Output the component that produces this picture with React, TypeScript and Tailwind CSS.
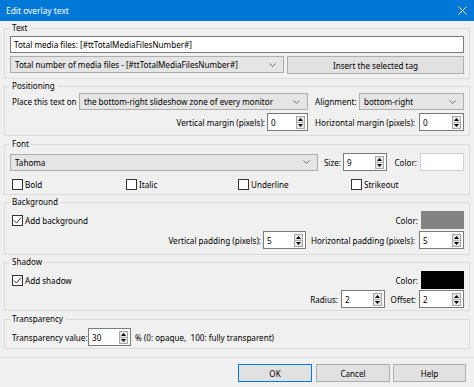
import React from 'react';

function Chevron() {
  return (
    <svg width="7" height="4" viewBox="0 0 7 4" className="shrink-0">
      <path d="M0.5 0.5 L3.5 3.5 L6.5 0.5" fill="none" stroke="#606060" strokeWidth="0.9" />
    </svg>
  );
}

function Select({ value, className = '' }: any) {
  return (
    <div className={`h-[17px] flex items-center justify-between bg-[#e5e5e5] border border-[#adadad] pl-[4px] pr-[7px] shrink-0 ${className}`}>
      <span className="truncate">{value}</span>
      <Chevron />
    </div>
  );
}

function Spin({ value, className = '' }: any) {
  return (
    <div className={`h-[18px] flex items-center justify-between bg-white border border-[#7a7a7a] pl-[3px] pr-[2px] shrink-0 ${className}`}>
      <span>{value}</span>
      <div className="w-[9px] h-[13px] flex flex-col border border-[#a8a8a8] bg-[#e6e6e6]">
        <div className="flex-1 flex items-center justify-center">
          <svg width="5" height="3" viewBox="0 0 5 3"><path d="M0 3 L2.5 0 L5 3Z" fill="#000" /></svg>
        </div>
        <div className="h-px bg-[#b8b8b8]" />
        <div className="flex-1 flex items-center justify-center">
          <svg width="5" height="3" viewBox="0 0 5 3"><path d="M0 0 L2.5 3 L5 0Z" fill="#000" /></svg>
        </div>
      </div>
    </div>
  );
}

function Check({ label, checked = false }: any) {
  return (
    <div className="flex items-center gap-[2px]">
      <div className="w-[11px] h-[11px] bg-white border border-[#333] flex items-center justify-center shrink-0">
        {checked && (
          <svg width="9" height="9" viewBox="0 0 9 9">
            <path d="M1 4.5 L3.5 7 L8 1.5" fill="none" stroke="#333" strokeWidth="1" />
          </svg>
        )}
      </div>
      <span>{label}</span>
    </div>
  );
}

function Group({ title, className = '', children }: any) {
  return (
    <fieldset className={`border border-[#dcdcdc] px-[5px] ${className}`}>
      <legend className="px-[2px] leading-[14px]">{title}</legend>
      {children}
    </fieldset>
  );
}

function Btn({ label, primary = false, className = '' }: any) {
  return (
    <div className={`h-[18px] flex items-center justify-center bg-[#e1e1e1] border ${primary ? 'border-[#0078d7]' : 'border-[#adadad]'} ${className}`}>
      {label}
    </div>
  );
}

export default function App() {
  return (
    <div className="w-[474px] h-[387px] bg-[#f0f0f0] flex flex-col text-[8.1px] leading-[11px] text-black font-['Noto_Sans',sans-serif] whitespace-nowrap overflow-hidden">
      {/* title bar */}
      <div className="h-[21px] bg-[#0078d7] text-white flex items-center justify-between pl-[6px] pr-[7px]">
        <span className="text-[8.4px]">Edit overlay text</span>
        <svg width="9" height="9" viewBox="0 0 9 9">
          <path d="M0.5 0.5 L8.5 8.5 M8.5 0.5 L0.5 8.5" stroke="#fff" strokeWidth="1" />
        </svg>
      </div>

      <div className="px-[4px] flex flex-col">
        <Group title="Text" className="pb-[4px]">
          <div className="pt-[1px] flex flex-col gap-[3px]">
            <div className="h-[17px] bg-white border border-[#7a7a7a] flex items-center pl-[3px]">
              Total media files: [#ttTotalMediaFilesNumber#]
            </div>
            <div className="flex">
              <Select value="Total number of media files - [#ttTotalMediaFilesNumber#]" className="w-[274px]" />
              <Btn label="Insert the selected tag" className="ml-[3px] flex-1 h-[17px]" />
            </div>
          </div>
        </Group>

        <Group title="Positioning" className="pb-[4px]">
          <div className="flex flex-col gap-[3px]">
            <div className="flex items-center">
              <span className="w-[69px] pl-[2px] shrink-0">Place this text on</span>
              <Select value="the bottom-right slideshow zone of every monitor" className="w-[229px]" />
              <span className="w-[51px] pl-[7px] shrink-0">Alignment:</span>
              <Select value="bottom-right" className="flex-1" />
            </div>
            <div className="flex items-center justify-end">
              <span className="pr-[2px]">Vertical margin (pixels):</span>
              <Spin value="0" className="w-[41px]" />
              <span className="w-[111px] text-right pr-[4px] shrink-0">Horizontal margin (pixels):</span>
              <Spin value="0" className="w-[45px]" />
            </div>
          </div>
        </Group>

        <Group title="Font" className="mt-[1px] pb-[4px]">
          <div className="pt-[2px] flex items-center">
            <Select value="Tahoma" className="w-[308px]" />
            <span className="w-[25px] text-right pr-[2px] shrink-0">Size:</span>
            <Spin value="9" className="w-[44px]" />
            <span className="w-[33px] text-right pr-[3px] shrink-0">Color:</span>
            <div className="flex-1 h-[18px] bg-white border border-[#d0d0d0]" />
          </div>
          <div className="mt-[8px] ml-[2px] grid grid-cols-[114px_112px_113px_1fr]">
            <Check label="Bold" />
            <Check label="Italic" />
            <Check label="Underline" />
            <Check label="Strikeout" />
          </div>
        </Group>

        <Group title="Background" className="pb-[5px]">
          <div className="pt-[2px] flex flex-col gap-[2px]">
            <div className="h-[18px] flex items-center justify-between">
              <div className="ml-[2px]"><Check label="Add background" checked /></div>
              <div className="flex items-center">
                <span className="pr-[3px]">Color:</span>
                <div className="w-[43px] h-[18px] bg-[#838383]" />
              </div>
            </div>
            <div className="flex items-center justify-end">
              <span className="pr-[2px]">Vertical padding (pixels):</span>
              <Spin value="5" className="w-[43px]" />
              <span className="w-[113px] text-right pr-[4px] shrink-0">Horizontal padding (pixels):</span>
              <Spin value="5" className="w-[45px]" />
            </div>
          </div>
        </Group>

        <Group title="Shadow" className="pb-[2px]">
          <div className="pt-[2px] flex flex-col gap-[1px]">
            <div className="h-[18px] flex items-center justify-between">
              <div className="ml-[2px]"><Check label="Add shadow" checked /></div>
              <div className="flex items-center">
                <span className="pr-[3px]">Color:</span>
                <div className="w-[43px] h-[18px] bg-black" />
              </div>
            </div>
            <div className="flex items-center justify-end">
              <span className="pr-[3px]">Radius:</span>
              <Spin value="2" className="w-[44px]" />
              <span className="w-[34px] text-right pr-[3px] shrink-0">Offset:</span>
              <Spin value="2" className="w-[45px]" />
            </div>
          </div>
        </Group>

        <Group title="Transparency" className="mt-[1px] pb-[2px]">
          <div className="pt-[2px] flex items-center">
            <span className="w-[78px] pl-[2px] shrink-0">Transparency value:</span>
            <Spin value="30" className="w-[43px]" />
            <span className="ml-[4px] whitespace-pre">% (0: opaque,  100: fully transparent)</span>
          </div>
        </Group>
      </div>

      <div className="mt-auto border-t border-[#dadada] pt-[6px] pb-[5px] pr-[8px] flex justify-end">
        <Btn label="OK" primary className="w-[74px]" />
        <Btn label="Cancel" className="w-[74px] ml-[4px]" />
        <Btn label="Help" className="w-[73px] ml-[3px]" />
      </div>
    </div>
  );
}
